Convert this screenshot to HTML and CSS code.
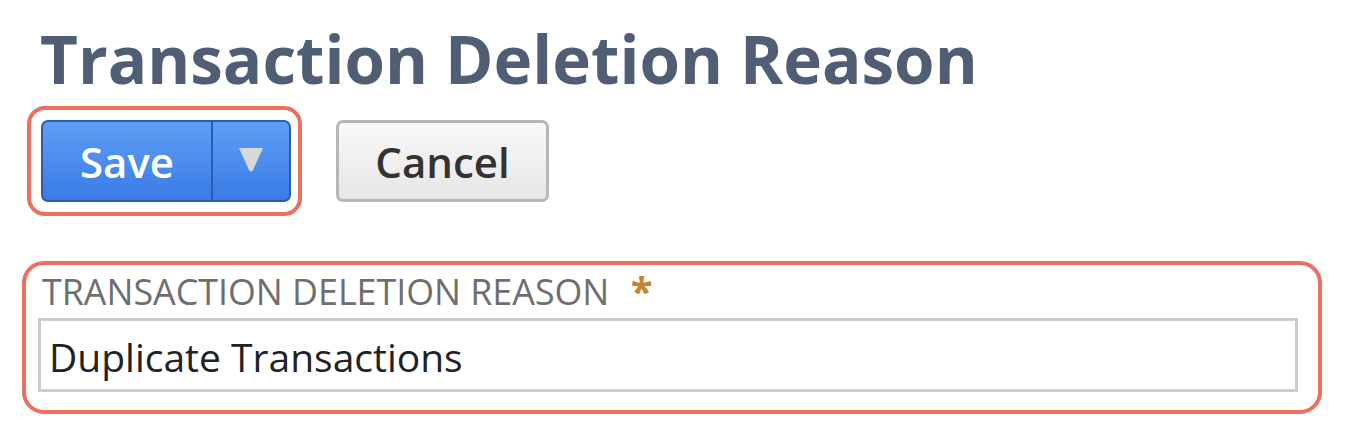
FILE: index.html
```html
<!DOCTYPE html>
<html lang="en">
<head>
<meta charset="utf-8">
<title>Transaction Deletion Reason</title>
<link rel="stylesheet" href="styles.css">
</head>
<body>
<main class="page">
  <h1 class="title">Transaction Deletion Reason</h1>
  <div class="actions">
    <div class="highlight highlight-buttons">
      <div class="split-button">
        <button class="btn-primary" type="button">Save</button>
        <button class="btn-menu" type="button" aria-label="More save options">
          <svg class="caret" width="24" height="24" viewBox="0 0 24 24" aria-hidden="true">
            <path d="M0 0 H24 L14 22 Q12 25 10 22 Z" fill="#d8d8d8"/>
          </svg>
        </button>
      </div>
    </div>
    <button class="btn-secondary" type="button">Cancel</button>
  </div>
  <div class="highlight highlight-field">
    <label class="field-label" for="reason">TRANSACTION DELETION REASON <span class="required">*</span></label>
    <div class="field-input" id="reason">Duplicate Transactions</div>
  </div>
</main>
</body>
</html>
```
FILE: styles.css
```css
html, body {
  margin: 0;
  padding: 0;
  background: #ffffff;
}

.page {
  font-family: "Open Sans", "Liberation Sans", sans-serif;
  display: flex;
  flex-direction: column;
  align-items: flex-start;
}

.title {
  margin: 0 0 0 40px;
  padding-top: 19px;
  font-size: 65.5px;
  line-height: 80px;
  font-weight: 700;
  color: #4f5d75;
  letter-spacing: 0;
}

.actions {
  display: flex;
  align-items: center;
  margin-top: 7px;
  margin-left: 27px;
  gap: 34px;
}

.highlight {
  border: 4px solid #ec6f5f;
  box-sizing: border-box;
}

.highlight-buttons {
  border-radius: 18px;
  padding: 10px 7px 10px 10px;
}

.split-button {
  display: flex;
  height: 82px;
  box-sizing: border-box;
  border: 2px solid #2a5dad;
  border-radius: 7px;
  overflow: hidden;
  background: linear-gradient(#5d9ef6, #3a7be6);
}

.split-button button {
  font-family: inherit;
  border: 0;
  margin: 0;
  background: transparent;
  height: 100%;
  display: flex;
  align-items: center;
  justify-content: center;
  padding: 0;
}

.btn-primary {
  width: 168px;
  color: #ffffff;
  font-size: 42px;
  font-weight: 600;
  border-right: 2px solid #2a5dad !important;
  box-sizing: content-box;
}

.btn-menu {
  width: 76px;
}

.caret {
  display: block;
  margin-top: -2px;
}

.btn-secondary {
  font-family: inherit;
  width: 213px;
  height: 82px;
  box-sizing: border-box;
  border: 3px solid #b7b7b7;
  border-radius: 7px;
  background: linear-gradient(#f9f9f9, #e6e6e6);
  color: #333333;
  font-size: 42px;
  font-weight: 600;
  padding: 0;
}

.highlight-field {
  margin-top: 45px;
  margin-left: 22px;
  width: 1300px;
  border-radius: 22px;
  padding: 6px 20px 18px 12px;
  display: flex;
  flex-direction: column;
}

.field-label {
  margin-left: 4px;
  font-size: 35.8px;
  line-height: 40px;
  font-weight: 400;
  color: #6e6e6e;
  white-space: nowrap;
}

.required {
  color: #c4852a;
  font-weight: 700;
  font-size: 40px;
  margin-left: 12px;
  vertical-align: top;
  line-height: 40px;
}

.field-input {
  margin-top: 7px;
  height: 74px;
  box-sizing: border-box;
  border: 3px solid #cccccc;
  padding: 4px 8px 0;
  font-size: 39px;
  line-height: 64px;
  color: #222222;
  white-space: nowrap;
}
```
